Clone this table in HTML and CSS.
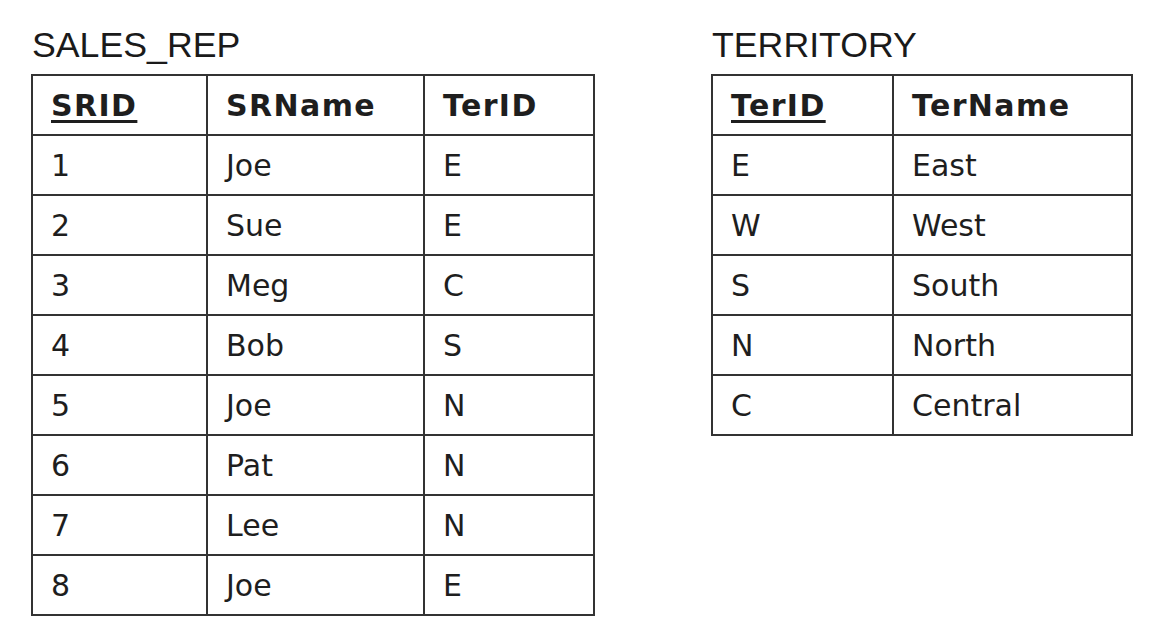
FILE: index.html
```html
<!DOCTYPE html>
<html>
<head>
<meta charset="utf-8">
<link rel="stylesheet" href="styles.css">
</head>
<body>
<div class="page">
  <section class="block">
    <h2 class="title">SALES_REP</h2>
    <table class="grid grid-sales">
      <colgroup><col class="c-srid"><col class="c-srname"><col class="c-terid"></colgroup>
      <thead>
        <tr><th><span class="pk">SRID</span></th><th>SRName</th><th>TerID</th></tr>
      </thead>
      <tbody>
        <tr><td>1</td><td>Joe</td><td>E</td></tr>
        <tr><td>2</td><td>Sue</td><td>E</td></tr>
        <tr><td>3</td><td>Meg</td><td>C</td></tr>
        <tr><td>4</td><td>Bob</td><td>S</td></tr>
        <tr><td>5</td><td>Joe</td><td>N</td></tr>
        <tr><td>6</td><td>Pat</td><td>N</td></tr>
        <tr><td>7</td><td>Lee</td><td>N</td></tr>
        <tr><td>8</td><td>Joe</td><td>E</td></tr>
      </tbody>
    </table>
  </section>
  <section class="block">
    <h2 class="title">TERRITORY</h2>
    <table class="grid grid-terr">
      <colgroup><col class="c-tid"><col class="c-tname"></colgroup>
      <thead>
        <tr><th><span class="pk">TerID</span></th><th>TerName</th></tr>
      </thead>
      <tbody>
        <tr><td>E</td><td>East</td></tr>
        <tr><td>W</td><td>West</td></tr>
        <tr><td>S</td><td>South</td></tr>
        <tr><td>N</td><td>North</td></tr>
        <tr><td>C</td><td>Central</td></tr>
      </tbody>
    </table>
  </section>
</div>
</body>
</html>
```

FILE: styles.css
```css
html, body {
  margin: 0;
  padding: 0;
  background: #fff;
}
.page {
  display: flex;
  align-items: flex-start;
  gap: 116px;
  padding: 25px 0 0 31px;
}
.title {
  margin: 0 0 9px 1px;
  font-family: "Liberation Sans", Arial, sans-serif;
  font-weight: normal;
  font-size: 35.7px;
  line-height: 40px;
  color: #1a1a1a;
}
.grid {
  border-collapse: collapse;
  table-layout: fixed;
  font-family: "DejaVu Sans", Verdana, sans-serif;
  font-size: 30px;
  color: #1e1e1e;
}
.grid-sales { width: 564px; }
.grid-terr { width: 422px; }
.c-srid { width: 175px; }
.c-srname { width: 217px; }
.c-terid { width: 170px; }
.c-tid { width: 181px; }
.c-tname { width: 239px; }
.grid th, .grid td {
  border: 2px solid #333;
  height: 60px;
  padding: 2px 0 0 18px;
  text-align: left;
  vertical-align: middle;
  box-sizing: border-box;
  line-height: 30px;
}
.grid th {
  font-weight: bold;
  letter-spacing: 1.4px;
}
.pk {
  text-decoration: underline;
  text-decoration-thickness: 3px;
  text-underline-offset: 4px;
}
```
